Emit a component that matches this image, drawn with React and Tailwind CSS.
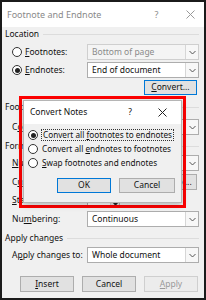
import React from "react";

const font = { fontFamily: '"Noto Sans", "Open Sans", sans-serif' };

const Chevron = () => (
    <svg width="7" height="5" viewBox="0 0 7 5" className="block">
        <path d="M0.5 1 L3.5 4 L6.5 1" fill="none" stroke="#555" strokeWidth="1" />
    </svg>
);

const Dropdown = ({ value, disabled }) => (
    <div
        className={`w-[112px] h-full flex items-stretch border ${disabled ? "border-[#cfcfcf] bg-[#f4f4f4] text-[#8a8a8a]" : "border-[#adadad] bg-white text-[#111]"}`}
    >
        <div className="flex-1 flex items-center pl-[4px] whitespace-nowrap overflow-hidden">{value}</div>
        <div className="w-[13px] flex items-center justify-center border-l border-[#d6d6d6] bg-[#f7f7f7]">
            <Chevron />
        </div>
    </div>
);

const Radio = ({ checked }) => (
    <span className="w-[10px] h-[10px] rounded-full border border-[#333] bg-white flex items-center justify-center shrink-0">
        {checked && <span className="w-[5px] h-[5px] rounded-full bg-[#222]" />}
    </span>
);

const GroupLabel = ({ children, className }) => (
    <div className={`flex items-center h-[12px] ${className}`}>
        <span className="text-[#111] whitespace-nowrap">{children}</span>
        <div className="flex-1 h-px bg-[#dcdcdc] ml-[4px]" />
    </div>
);

const Btn = ({ children, className, disabled, focus }) => (
    <button
        className={`h-full flex items-center justify-center border ${focus ? "border-[#0078d7]" : "border-[#adadad]"} ${disabled ? "bg-[#ececec] text-[#9a9a9a] border-[#cfcfcf]" : "bg-[#e1e1e1] text-[#111]"} ${className}`}
    >
        {children}
    </button>
);

const Row = ({ label, children, className }) => (
    <div className={`flex items-center h-[16px] ${className}`}>
        <span className="w-[82px] pl-[7px] whitespace-nowrap">{label}</span>
        {children}
    </div>
);

// the small dialog that sits over the main one, framed in red
const ConvertNotes = () => (
    <div className="absolute left-[17px] top-[94px] w-[167px] h-[112px] border-[3px] border-[#ff0000] text-[8.2px]">
        <div className="m-[1px] h-[103px] border border-[#b5b5b5] bg-[#f0f0f0] shadow-[0_2px_6px_rgba(0,0,0,0.25)]">
            <div className="h-[23px] bg-white flex items-center pl-[6px] text-[#111] text-[8.5px]">
                <span>Convert Notes</span>
                <span className="ml-[41px]">?</span>
                <svg width="9" height="9" viewBox="0 0 9 9" className="ml-[26px]">
                    <path d="M0.5 0.5 L8.5 8.5 M8.5 0.5 L0.5 8.5" stroke="#222" strokeWidth="1" />
                </svg>
            </div>
            <div className="pl-[4px]">
                <div className="flex items-center h-[12px] mt-[5px]">
                    <Radio checked />
                    <span className="ml-[3px] px-[1px] border border-dotted border-[#333] leading-[10px] whitespace-nowrap">
                        Convert all <u>f</u>ootnotes to endnotes
                    </span>
                </div>
                <div className="flex items-center h-[12px] mt-[2px]">
                    <Radio />
                    <span className="ml-[4px] whitespace-nowrap">Convert all <u>e</u>ndnotes to footnotes</span>
                </div>
                <div className="flex items-center h-[12px] mt-[2px]">
                    <Radio />
                    <span className="ml-[4px] whitespace-nowrap"><u>S</u>wap footnotes and endnotes</span>
                </div>
                <div className="flex h-[15px] mt-[9px] pl-[29px] gap-[8px] text-[8.5px]">
                    <Btn focus className="w-[54px]">OK</Btn>
                    <Btn className="w-[56px]">Cancel</Btn>
                </div>
            </div>
        </div>
    </div>
);

export default function App() {
    return (
        <div
            className="relative w-[206px] h-[300px] border-2 border-[#1b1b1b] bg-[#f0f0f0] overflow-hidden text-[8.5px] text-[#111]"
            style={font}
        >
            <div className="h-[25px] bg-white flex items-center pl-[5px] text-[#8a8a8a] text-[9px]">
                <span>Footnote and Endnote</span>
                <span className="ml-[53px]">?</span>
                <svg width="9" height="9" viewBox="0 0 9 9" className="ml-[28px]">
                    <path d="M0.5 0.5 L8.5 8.5 M8.5 0.5 L0.5 8.5" stroke="#999" strokeWidth="1" />
                </svg>
            </div>

            <div className="pl-[3px] pr-[5px]">
                <GroupLabel className="mt-[1px]">Location</GroupLabel>

                <div className="flex items-center h-[16px] mt-[4px]">
                    <div className="w-[82px] pl-[7px] flex items-center">
                        <Radio />
                        <span className="ml-[3px]"><u>F</u>ootnotes:</span>
                    </div>
                    <Dropdown value="Bottom of page" disabled />
                </div>
                <div className="flex items-center h-[16px] mt-[2px]">
                    <div className="w-[82px] pl-[7px] flex items-center">
                        <Radio checked />
                        <span className="ml-[3px]"><u>E</u>ndnotes:</span>
                    </div>
                    <Dropdown value="End of document" />
                </div>
                <div className="flex justify-end h-[15px] mt-[2px] pr-[2px]">
                    <Btn focus className="w-[53px]"><span><u>C</u>onvert...</span></Btn>
                </div>

                <GroupLabel className="mt-[6px]">Footnote layout</GroupLabel>
                <Row label={<span>C<u>o</u>lumns:</span>} className="mt-[6px]">
                    <Dropdown value="Match section layout" />
                </Row>

                <GroupLabel className="mt-[5px]">Format</GroupLabel>
                <Row label={<span><u>N</u>umber format:</span>} className="mt-[3px]">
                    <Dropdown value="i, ii, iii, ..." />
                </Row>
                <Row label={<span>C<u>u</u>stom mark:</span>} className="mt-[3px]">
                    <div className="w-[58px] h-full border border-[#adadad] bg-white" />
                    <Btn className="w-[47px] ml-[5px]"><span>S<u>y</u>mbol...</span></Btn>
                </Row>
                <div className="flex items-center h-[15px] mt-[3px]">
                    <span className="w-[82px] pl-[7px]"><u>S</u>tart at:</span>
                    <div className="w-[33px] h-full flex border border-[#adadad] bg-white">
                        <span className="flex-1 pl-[3px] flex items-center">i</span>
                        <div className="w-[9px] flex flex-col border-l border-[#d0d0d0]">
                            <div className="flex-1 flex items-center justify-center bg-[#e5e5e5] border-b border-[#d0d0d0]">
                                <svg width="5" height="3" viewBox="0 0 5 3"><path d="M0 3 L2.5 0 L5 3 Z" fill="#222" /></svg>
                            </div>
                            <div className="flex-1 flex items-center justify-center bg-[#e5e5e5]">
                                <svg width="5" height="3" viewBox="0 0 5 3"><path d="M0 0 L2.5 3 L5 0 Z" fill="#222" /></svg>
                            </div>
                        </div>
                    </div>
                </div>
                <Row label={<span>Nu<u>m</u>bering:</span>} className="mt-[3px]">
                    <Dropdown value="Continuous" />
                </Row>

                <GroupLabel className="mt-[5px]">Apply changes</GroupLabel>
                <Row label={<span>A<u>p</u>ply changes to:</span>} className="mt-[3px]">
                    <Dropdown value="Whole document" />
                </Row>

                <div className="flex h-[16px] mt-[13px] pl-[15px] gap-[8px]">
                    <Btn className="w-[54px]"><span><u>I</u>nsert</span></Btn>
                    <Btn className="w-[54px]">Cancel</Btn>
                    <Btn disabled className="w-[54px]"><span><u>A</u>pply</span></Btn>
                </div>
            </div>

            <ConvertNotes />
        </div>
    );
}
